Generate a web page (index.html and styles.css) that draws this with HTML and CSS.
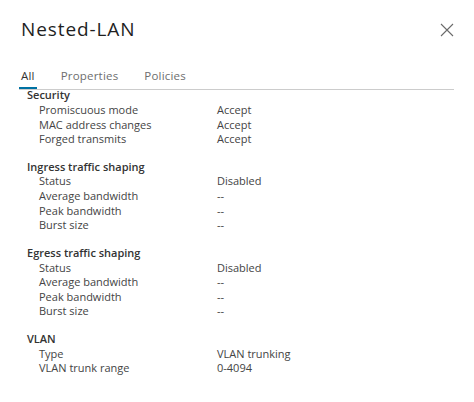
FILE: index.html
```html
<!DOCTYPE html>
<html>
<head>
<meta charset="utf-8">
<link rel="stylesheet" href="styles.css">
</head>
<body>
<div class="modal">
  <div class="header">
    <h1 class="title">Nested-LAN</h1>
    <button class="close" aria-label="Close">
      <svg width="14" height="14" viewBox="0 0 14 14"><path d="M1 1 L13 13 M13 1 L1 13" stroke="#6a6a6a" stroke-width="1.1" fill="none"/></svg>
    </button>
  </div>
  <div class="tabs">
    <span class="tab active">All</span>
    <span class="tab">Properties</span>
    <span class="tab">Policies</span>
  </div>
  <div class="content">
    <div class="group">
      <div class="heading">Security</div>
      <div class="row"><span class="label">Promiscuous mode</span><span class="value">Accept</span></div>
      <div class="row"><span class="label">MAC address changes</span><span class="value">Accept</span></div>
      <div class="row"><span class="label">Forged transmits</span><span class="value">Accept</span></div>
    </div>
    <div class="group">
      <div class="heading">Ingress traffic shaping</div>
      <div class="row"><span class="label">Status</span><span class="value">Disabled</span></div>
      <div class="row"><span class="label">Average bandwidth</span><span class="value">--</span></div>
      <div class="row"><span class="label">Peak bandwidth</span><span class="value">--</span></div>
      <div class="row"><span class="label">Burst size</span><span class="value">--</span></div>
    </div>
    <div class="group">
      <div class="heading">Egress traffic shaping</div>
      <div class="row"><span class="label">Status</span><span class="value">Disabled</span></div>
      <div class="row"><span class="label">Average bandwidth</span><span class="value">--</span></div>
      <div class="row"><span class="label">Peak bandwidth</span><span class="value">--</span></div>
      <div class="row"><span class="label">Burst size</span><span class="value">--</span></div>
    </div>
    <div class="group">
      <div class="heading">VLAN</div>
      <div class="row"><span class="label">Type</span><span class="value">VLAN trunking</span></div>
      <div class="row"><span class="label">VLAN trunk range</span><span class="value">0-4094</span></div>
    </div>
  </div>
</div>
</body>
</html>
```

FILE: styles.css
```css
html, body {
  margin: 0;
  padding: 0;
  background: #ffffff;
}
body {
  font-family: "Open Sans", "Liberation Sans", sans-serif;
  color: #444444;
}
.modal {
  padding: 15px 20px 0 19px;
}
.header {
  display: flex;
  justify-content: space-between;
  align-items: flex-start;
  padding-left: 2px;
}
.title {
  margin: 0;
  font-size: 19px;
  font-weight: 400;
  line-height: 28px;
  letter-spacing: 0.9px;
  color: #1f1f1f;
}
.close {
  border: 0;
  background: none;
  padding: 0;
  margin: 8px 0.5px 0 0;
  width: 14px;
  height: 14px;
  display: block;
}
.close svg {
  display: block;
}
.tabs {
  margin-top: 24.5px;
  display: flex;
  gap: 22px;
  border-bottom: 1px solid #cccccc;
}
.tab {
  font-size: 11.5px;
  letter-spacing: 0.2px;
  line-height: 16px;
  padding: 0 2px 5.5px;
  color: #6e6e6e;
}
.tab.active {
  color: #333333;
  box-shadow: inset 0 -2px 0 #0072a3;
}
.content {
  margin-top: -1.6px;
  padding-left: 8px;
  font-size: 11px;
}
.group + .group {
  margin-top: 13.1px;
}
.heading {
  font-weight: 600;
  line-height: 14.6px;
  color: #333333;
}
.row {
  display: flex;
  line-height: 14.6px;
  padding-left: 12px;
}
.label {
  width: 178px;
  flex: none;
}
.value {
  flex: 1;
}
```
